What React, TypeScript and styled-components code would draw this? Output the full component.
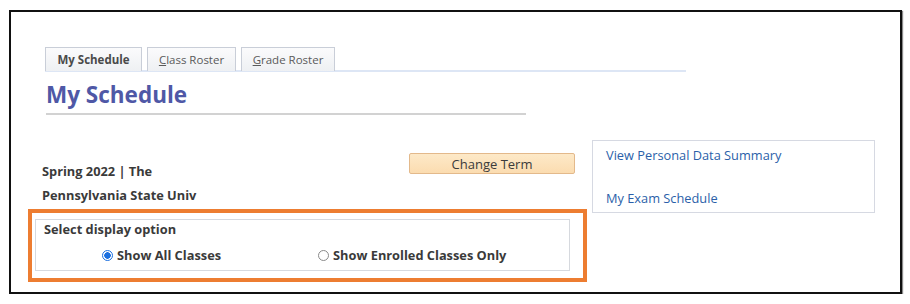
import styled, { createGlobalStyle } from "styled-components";

const GlobalStyle = createGlobalStyle`
    html, body {
        margin: 0;
        padding: 0;
        background: #ffffff;
        font-family: "Open Sans", "Liberation Sans", sans-serif;
    }
`;

const Frame = styled.div`
    box-sizing: border-box;
    margin: 10px 0 0 9px;
    width: 893px;
    height: 284px;
    border: 2px solid #111;
    box-shadow: 1px 1px 1px #8a8a8a;
    padding: 35px 0 0 17px;
`;

const TabBar = styled.div`
    display: flex;
    gap: 5px;
    width: 641px;
    margin-left: 17px;
    border-bottom: 2px solid #dde6f5;
    height: 23px;
`;

const Tab = styled.div<{ $active?: boolean; $width: number }>`
    box-sizing: border-box;
    width: ${(p) => p.$width}px;
    height: 24px;
    border: 1px solid #c9ced8;
    border-bottom: none;
    background: linear-gradient(#fbfbfc, #eef0f3);
    display: flex;
    align-items: center;
    justify-content: center;
    font-size: 11.5px;
    font-weight: ${(p) => (p.$active ? 700 : 400)};
    color: ${(p) => (p.$active ? "#4a4a4a" : "#5a5a5a")};
    u {
        text-decoration: underline;
    }
`;

const Title = styled.h1`
    margin: 9px 0 0 18px;
    width: 480px;
    font-size: 22.5px;
    line-height: 28px;
    font-weight: 700;
    color: #4f58a6;
    padding-bottom: 4px;
    border-bottom: 2px solid #d2d2d2;
`;

const Row = styled.div`
    display: flex;
    align-items: flex-start;
    margin-top: 25px;
`;

const LeftCol = styled.div`
    width: 559px;
`;

const TermRow = styled.div`
    display: flex;
    justify-content: space-between;
    align-items: flex-start;
    height: 69px;
    padding: 0 12px 0 14px;
`;

const TermText = styled.div`
    padding-top: 19px;
    font-size: 12.8px;
    line-height: 24px;
    font-weight: 700;
    color: #3a3a3a;
`;

const Button = styled.button`
    margin-top: 13px;
    width: 166px;
    height: 21px;
    border: 1px solid #e3b98b;
    border-radius: 2px;
    background: linear-gradient(#fde9c8, #fbdcb0);
    font-family: inherit;
    font-size: 13px;
    color: #3b3b3b;
    padding: 0;
`;

const Highlight = styled.div`
    box-sizing: border-box;
    height: 73px;
    border: 4px solid #ed7d31;
    padding: 6px 13px 7px 3px;
`;

const OptionBox = styled.div`
    box-sizing: border-box;
    height: 100%;
    border: 1px solid #d6d9de;
    padding: 0 0 0 8px;
`;

const OptionLabel = styled.div`
    font-size: 12.8px;
    line-height: 18px;
    font-weight: 700;
    color: #3a3a3a;
`;

const RadioRow = styled.div`
    display: flex;
    margin-top: 8px;
`;

const RadioOption = styled.label<{ $indent: number }>`
    display: flex;
    align-items: center;
    gap: 4px;
    margin-left: ${(p) => p.$indent}px;
    font-size: 12.8px;
    font-weight: 700;
    color: #3a3a3a;
    line-height: 18px;
`;

const Radio = styled.span<{ $checked?: boolean }>`
    box-sizing: border-box;
    width: 11px;
    height: 11px;
    border-radius: 50%;
    border: 1px solid ${(p) => (p.$checked ? "#1a6fe0" : "#8a8a8a")};
    background: ${(p) => (p.$checked ? "radial-gradient(circle, #1a6fe0 0 3px, #ffffff 3.5px)" : "#ffffff")};
`;

const LinkBox = styled.div`
    box-sizing: border-box;
    margin-left: 5px;
    width: 283px;
    height: 73px;
    border: 1px solid #d6d9e2;
    padding: 5px 0 0 13px;
    display: flex;
    flex-direction: column;
    gap: 24px;
`;

const LinkItem = styled.a`
    font-size: 12.8px;
    line-height: 19px;
    color: #2b5fa9;
    text-decoration: none;
`;

const Root = styled.div``;

export default function App() {
    return (
        <Root>
            <GlobalStyle />
            <Frame>
                <TabBar>
                    <Tab $active $width={97}>My Schedule</Tab>
                    <Tab $width={89}><span><u>C</u>lass Roster</span></Tab>
                    <Tab $width={94}><span><u>G</u>rade Roster</span></Tab>
                </TabBar>
                <Title>My Schedule</Title>
                <Row>
                    <LeftCol>
                        <TermRow>
                            <TermText>
                                Spring 2022 | The
                                <br />
                                Pennsylvania State Univ
                            </TermText>
                            <Button>Change Term</Button>
                        </TermRow>
                        <Highlight>
                            <OptionBox>
                                <OptionLabel>Select display option</OptionLabel>
                                <RadioRow>
                                    <RadioOption $indent={58}>
                                        <Radio $checked />
                                        Show All Classes
                                    </RadioOption>
                                    <RadioOption $indent={97}>
                                        <Radio />
                                        Show Enrolled Classes Only
                                    </RadioOption>
                                </RadioRow>
                            </OptionBox>
                        </Highlight>
                    </LeftCol>
                    <LinkBox>
                        <LinkItem href="#">View Personal Data Summary</LinkItem>
                        <LinkItem href="#">My Exam Schedule</LinkItem>
                    </LinkBox>
                </Row>
            </Frame>
        </Root>
    );
}
